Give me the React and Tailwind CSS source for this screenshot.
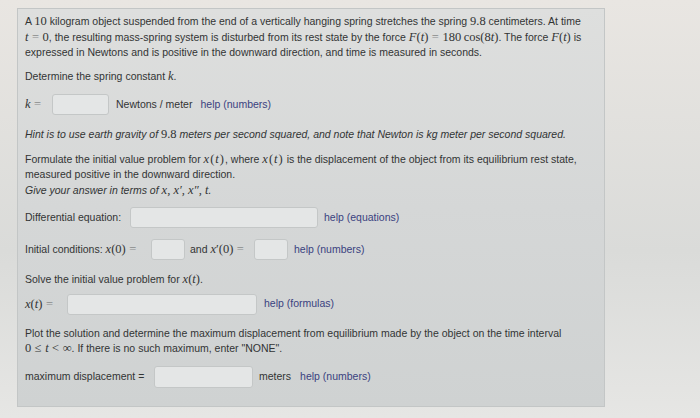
import React from "react";

// math bits, roughly like MathJax output
const M = ({ children, className = "" }) => (
  <span className={`font-['Liberation_Serif',serif] text-[12.5px] ${className}`}>{children}</span>
);
const V = ({ children }) => <i>{children}</i>;
const Eq = () => <span className="mx-[3.5px] text-[#8a8c8c]">=</span>;

const Box = ({ className = "" }) => (
  <span className={`inline-block shrink-0 h-[21px] rounded-[3px] border border-[#c4c7c7] bg-[#e4e6e6] ${className}`} />
);

const Help = ({ children, className = "" }) => (
  <span className={`text-[#3a4280] ${className}`}>{children}</span>
);

export default function App() {
  return (
    <div className="w-[700px] h-[418px] overflow-hidden bg-[linear-gradient(180deg,#e9e6e2_0%,#dadbd9_60%,#e6e6e4_100%)] pt-[8px] pl-[17px] font-['Liberation_Sans',Arial,sans-serif] text-[10.5px] text-[#323434]">
      <div className="w-[588px] h-[399px] border border-[#c3c6c6] bg-[linear-gradient(180deg,#dedfde_0%,#d5d7d7_50%,#cfd2d2_100%)] pl-[7px] pt-[5px]">
        <p className="leading-[15.5px]">
          A <M>10</M> kilogram object suspended from the end of a vertically hanging spring stretches the spring <M>9.8</M> centimeters. At time
          <br />
          <M>
            <V>t</V>
            <Eq />0
          </M>
          , the resulting mass-spring system is disturbed from its rest state by the force{" "}
          <M>
            <V>F</V>(<V>t</V>)<Eq />180<span className="ml-[2.5px]">cos</span>(8<V>t</V>)
          </M>
          . The force{" "}
          <M>
            <V>F</V>(<V>t</V>)
          </M>{" "}
          is
          <br />
          expressed in Newtons and is positive in the downward direction, and time is measured in seconds.
        </p>

        <p className="mt-[8px] leading-[15.5px]">
          Determine the spring constant{" "}
          <M>
            <V>k</V>
          </M>
          .
        </p>

        <div className="mt-[10px] flex items-center h-[21px]">
          <M className="w-[27px]">
            <V>k</V>
            <Eq />
          </M>
          <Box className="w-[57px]" />
          <span className="ml-[7px]">Newtons / meter</span>
          <Help className="ml-[8px]">help (numbers)</Help>
        </div>

        <p className="mt-[12px] leading-[15.5px] italic">
          Hint is to use earth gravity of <M className="not-italic">9.8</M> meters per second squared, and note that Newton is kg meter per second squared.
        </p>

        <p className="mt-[9px] leading-[15.5px]">
          Formulate the initial value problem for{" "}
          <M className="tracking-[1px]">
            <V>x</V>(<V>t</V>)
          </M>
          , where{" "}
          <M className="tracking-[1px]">
            <V>x</V>(<V>t</V>)
          </M>{" "}
          is the displacement of the object from its equilibrium rest state,
          <br />
          measured positive in the downward direction.
          <br />
          <span className="italic">
            Give your answer in terms of{" "}
            <M>
              <V>x</V>, <V>x</V>′, <V>x</V>″, <V>t</V>
            </M>
            .
          </span>
        </p>

        <div className="mt-[9px] flex items-center h-[21px]">
          <span className="w-[105px]">Differential equation:</span>
          <Box className="w-[188px]" />
          <Help className="ml-[6px]">help (equations)</Help>
        </div>

        <div className="mt-[11px] flex items-center h-[21px]">
          <span className="w-[126px]">
            Initial conditions:{" "}
            <M>
              <V>x</V>(0)
              <Eq />
            </M>
          </span>
          <Box className="w-[34px]" />
          <span className="ml-[5px] w-[64px]">
            and{" "}
            <M>
              <V>x</V>′(0)
              <Eq />
            </M>
          </span>
          <Box className="w-[34px]" />
          <Help className="ml-[6px]">help (numbers)</Help>
        </div>

        <p className="mt-[12px] leading-[15.5px]">
          Solve the initial value problem for{" "}
          <M>
            <V>x</V>(<V>t</V>)
          </M>
          .
        </p>

        <div className="mt-[6px] flex items-center h-[21px]">
          <M className="w-[42px]">
            <V>x</V>(<V>t</V>)
            <Eq />
          </M>
          <Box className="w-[190px]" />
          <Help className="ml-[7px]">help (formulas)</Help>
        </div>

        <p className="mt-[11px] leading-[15.5px]">
          Plot the solution and determine the maximum displacement from equilibrium made by the object on the time interval
          <br />
          <M>
            0<span className="mx-[3.5px]">≤</span>
            <V>t</V>
            <span className="mx-[3.5px]">&lt;</span>∞
          </M>
          . If there is no such maximum, enter "NONE".
        </p>

        <div className="mt-[9px] flex items-center h-[22px]">
          <span className="w-[129px]">maximum displacement =</span>
          <Box className="w-[99px] h-[22px]" />
          <span className="ml-[6px]">meters</span>
          <Help className="ml-[9px]">help (numbers)</Help>
        </div>
      </div>
    </div>
  );
}
